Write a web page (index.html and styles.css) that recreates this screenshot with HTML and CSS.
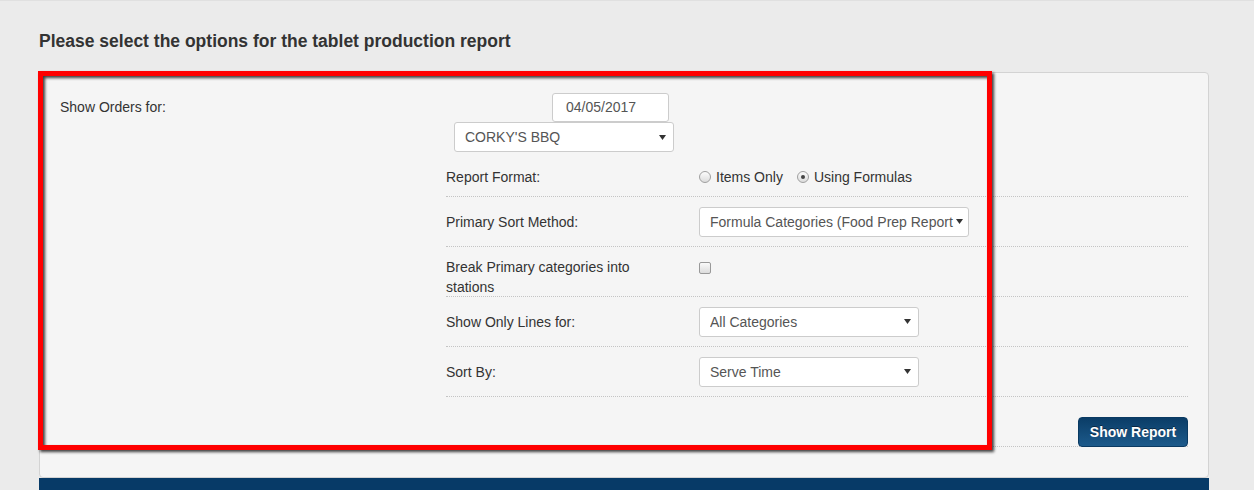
FILE: index.html
```html
<!DOCTYPE html>
<html>
<head>
<meta charset="utf-8">
<title>Tablet production report</title>
<link rel="stylesheet" href="styles.css">
</head>
<body>
<div class="page">
  <h1 class="title">Please select the options for the tablet production report</h1>
  <div class="panel">
    <div class="panel-grid">
      <div class="orders-label">Show Orders for:</div>
      <div class="right-col">
        <div class="date-line"><div class="date-input">04/05/2017</div></div>
        <div class="select corky"><span class="select-text">CORKY'S BBQ</span><svg class="arrow" width="7" height="5" viewBox="0 0 7 5"><path d="M0 0H7L3.5 5Z"/></svg></div>

        <div class="row row-short">
          <div class="label">Report Format:</div>
          <div class="control radios">
            <span class="radio-item"><span class="radio"></span>Items Only</span>
            <span class="radio-item"><span class="radio checked"></span>Using Formulas</span>
          </div>
        </div>

        <div class="row">
          <div class="label">Primary Sort Method:</div>
          <div class="control"><div class="select wide"><span class="select-text">Formula Categories (Food Prep Report</span><svg class="arrow" width="7" height="5" viewBox="0 0 7 5"><path d="M0 0H7L3.5 5Z"/></svg></div></div>
        </div>

        <div class="row row-top">
          <div class="label label-wrap">Break Primary categories into stations</div>
          <div class="control"><span class="checkbox"></span></div>
        </div>

        <div class="row">
          <div class="label">Show Only Lines for:</div>
          <div class="control"><div class="select mid"><span class="select-text">All Categories</span><svg class="arrow" width="7" height="5" viewBox="0 0 7 5"><path d="M0 0H7L3.5 5Z"/></svg></div></div>
        </div>

        <div class="row">
          <div class="label">Sort By:</div>
          <div class="control"><div class="select mid"><span class="select-text">Serve Time</span><svg class="arrow" width="7" height="5" viewBox="0 0 7 5"><path d="M0 0H7L3.5 5Z"/></svg></div></div>
        </div>

        <div class="row button-row">
          <button class="btn-report">Show Report</button>
        </div>
      </div>
    </div>
  </div>
  <div class="footer-bar"></div>
</div>
<div class="highlight"></div>
</body>
</html>
```
FILE: styles.css
```css
html, body {
  margin: 0;
  padding: 0;
  overflow: hidden;
}
body {
  background: #ebebeb;
  border-top: 1px solid #e0e0e0;
  font-family: "Liberation Sans", Arial, sans-serif;
  font-size: 14px;
  color: #333;
  height: 489px;
  position: relative;
}
.page {
  padding: 30px 45px 0 39px;
}
.title {
  margin: 0;
  font-size: 17.5px;
  line-height: 20px;
  font-weight: bold;
  color: #333;
}
.panel {
  margin-top: 21px;
  background: #f5f5f5;
  border: 1px solid #d3d3d3;
  border-radius: 4px;
  padding: 20px 20px 30px 20px;
}
.panel-grid {
  display: grid;
  grid-template-columns: 386px 1fr;
}
.orders-label {
  line-height: 29px;
}
.date-line {
  padding-left: 106px;
}
.date-input {
  box-sizing: border-box;
  width: 117px;
  height: 29px;
  line-height: 27px;
  padding-left: 13px;
  background: #fff;
  border: 1px solid #ccc;
  border-radius: 3px;
  color: #555;
}
.select {
  box-sizing: border-box;
  height: 30px;
  background: #fff;
  border: 1px solid #ccc;
  border-radius: 3px;
  display: flex;
  align-items: center;
  padding: 0 7px 0 10px;
  color: #555;
  gap: 4px;
}
.select-text {
  flex: 1;
  white-space: nowrap;
  overflow: hidden;
}
.arrow {
  flex: none;
  fill: #333;
}
.corky {
  width: 220px;
  margin: 0 0 0 8px;
}
.wide {
  width: 270px;
  padding-right: 5px;
  gap: 2px;
}
.mid {
  width: 220px;
}
.row {
  display: grid;
  grid-template-columns: 253px 1fr;
  align-items: center;
  height: 49px;
  border-bottom: 1px dotted #c4c4c4;
}
.row-short {
  margin-top: 5px;
  height: 39px;
}
.row-top {
  align-items: start;
}
.row-top .label {
  padding-top: 10px;
  line-height: 20px;
}
.row-top .control {
  padding-top: 15px;
}
.label-wrap {
  max-width: 200px;
}
.radios {
  display: flex;
  align-items: center;
  gap: 14px;
}
.radio-item {
  display: inline-flex;
  align-items: center;
  gap: 5px;
}
.radio {
  box-sizing: border-box;
  width: 12px;
  height: 12px;
  border-radius: 50%;
  border: 1px solid #a0a0a0;
  background: linear-gradient(#fcfcfc, #dcdcdc);
  display: inline-flex;
  align-items: center;
  justify-content: center;
}
.radio.checked::after {
  content: "";
  width: 4px;
  height: 4px;
  border-radius: 50%;
  background: #444;
}
.checkbox {
  display: block;
  box-sizing: border-box;
  width: 12px;
  height: 12px;
  border: 1px solid #999;
  border-radius: 2px;
  background: linear-gradient(#fafafa, #dcdcdc);
}
.button-row {
  display: flex;
  justify-content: flex-end;
  align-items: flex-start;
}
.btn-report {
  margin-top: 20px;
  width: 110px;
  height: 30px;
  border: 1px solid #0a3a62;
  border-radius: 4px;
  background: linear-gradient(#0b3d67, #1c5a8b);
  color: #fff;
  font-family: "Liberation Sans", Arial, sans-serif;
  font-size: 14px;
  font-weight: bold;
  text-shadow: 0 -1px 0 rgba(0, 0, 0, 0.45);
  padding: 0;
}
.footer-bar {
  height: 12px;
  background: #073a67;
}
.highlight {
  position: absolute;
  left: 38px;
  top: 70px;
  width: 954px;
  height: 379px;
  box-sizing: border-box;
  border: 5px solid #ff0000;
  filter: drop-shadow(2px 2px 1.5px rgba(0, 0, 0, 0.75));
  pointer-events: none;
}
```
